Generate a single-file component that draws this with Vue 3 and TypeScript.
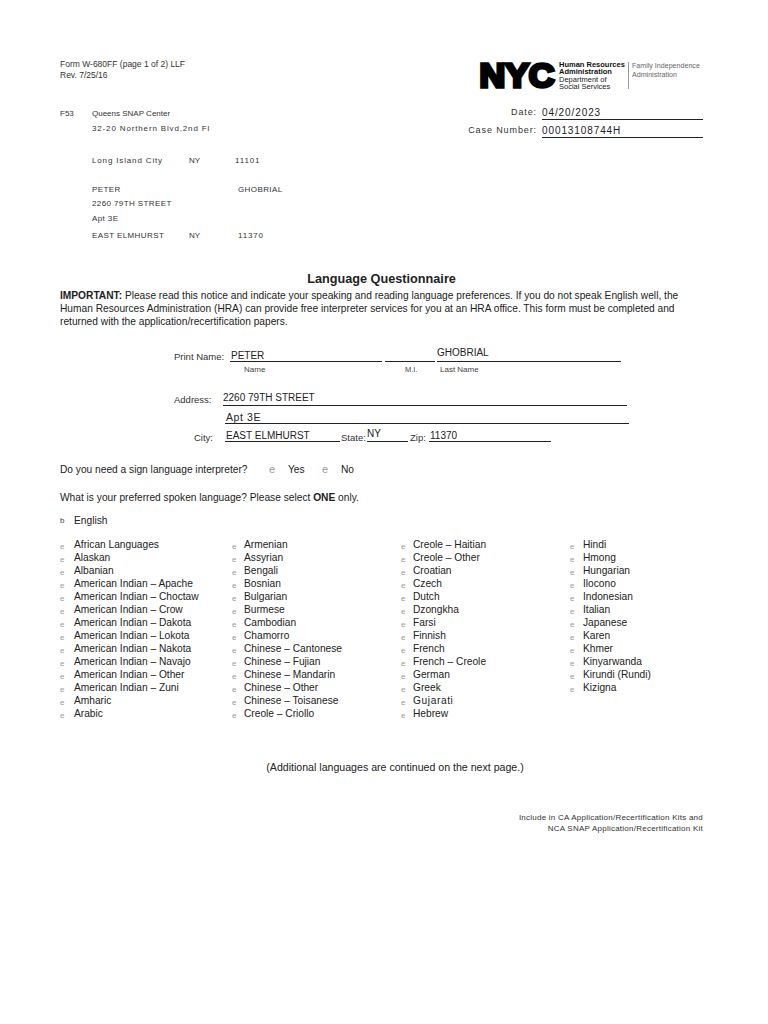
<script setup lang="ts">
const columns: string[][] = [
  ['African Languages','Alaskan','Albanian','American Indian – Apache','American Indian – Choctaw','American Indian – Crow','American Indian – Dakota','American Indian – Lokota','American Indian – Nakota','American Indian – Navajo','American Indian – Other','American Indian – Zuni','Amharic','Arabic'],
  ['Armenian','Assyrian','Bengali','Bosnian','Bulgarian','Burmese','Cambodian','Chamorro','Chinese – Cantonese','Chinese – Fujian','Chinese – Mandarin','Chinese – Other','Chinese – Toisanese','Creole – Criollo'],
  ['Creole – Haitian','Creole – Other','Croatian','Czech','Dutch','Dzongkha','Farsi','Finnish','French','French – Creole','German','Greek','Gujarati','Hebrew'],
  ['Hindi','Hmong','Hungarian','Ilocono','Indonesian','Italian','Japanese','Karen','Khmer','Kinyarwanda','Kirundi (Rundi)','Kizigna'],
]
</script>

<template>
  <main class="page">
    <header class="top">
      <div class="formid">
        <div>Form W-680FF (page 1 of 2) LLF</div>
        <div>Rev. 7/25/16</div>
      </div>
      <div class="logo">
        <svg class="nyc" width="78" height="40" viewBox="0 0 78 40" role="img" aria-label="NYC">
          <text x="1.5" y="31" textLength="75" lengthAdjust="spacingAndGlyphs" font-family="Liberation Sans" font-weight="700" font-size="34" stroke="#000" stroke-width="3.4" fill="#000">NYC</text>
        </svg>
        <div class="hra">
          <b>Human Resources</b>
          <b>Administration</b>
          <span>Department of</span>
          <span>Social Services</span>
        </div>
        <div class="fia">
          <span>Family Independence</span>
          <span>Administration</span>
        </div>
      </div>
    </header>

    <section class="address-block">
      <div class="addr-left">
        <div class="a-row first"><span class="code">F53</span><span>Queens SNAP Center</span></div>
        <div class="a-row second"><span class="code"></span><span class="sp">32-20 Northern Blvd,2nd Fl</span></div>
        <div class="a-row third sp"><span class="code"></span><span class="city">Long Island City</span><span class="st">NY</span><span class="zip1">11101</span></div>
        <div class="a-row fourth sn"><span class="code"></span><span class="wide">PETER</span><span>GHOBRIAL</span></div>
        <div class="a-row t1 sn"><span class="code"></span><span>2260 79TH STREET</span></div>
        <div class="a-row t2 sn"><span class="code"></span><span>Apt 3E</span></div>
        <div class="a-row t3 sn"><span class="code"></span><span class="city">EAST ELMHURST</span><span class="st">NY</span><span class="zip2">11370</span></div>
      </div>
      <div class="case">
        <div class="case-row"><span class="case-label">Date:</span><span class="case-val">04/20/2023</span></div>
        <div class="case-row"><span class="case-label">Case Number:</span><span class="case-val">00013108744H</span></div>
      </div>
    </section>

    <h1>Language Questionnaire</h1>
    <p class="notice"><b>IMPORTANT:</b> Please read this notice and indicate your speaking and reading language preferences. If you do not speak English well, the Human Resources Administration (HRA) can provide free interpreter services for you at an HRA office. This form must be completed and returned with the application/recertification papers.</p>

    <section class="fields">
      <div class="f-row name-row">
        <span class="f-label l1">Print Name:</span>
        <span class="line first-name">PETER</span>
        <span class="line mi"></span>
        <span class="line last-name">GHOBRIAL</span>
      </div>
      <div class="captions"><span class="c1">Name</span><span class="c2">M.I.</span><span>Last Name</span></div>
      <div class="f-row addr1">
        <span class="f-label l2">Address:</span>
        <span class="line street">2260 79TH STREET</span>
      </div>
      <div class="f-row addr2"><span class="line apt">Apt 3E</span></div>
      <div class="f-row addr3">
        <span class="f-label l3">City:</span>
        <span class="line city-val">EAST ELMHURST</span>
        <span class="f-label state-label">State:</span>
        <span class="line state-val">NY</span>
        <span class="f-label zip-label">Zip:</span>
        <span class="line zip-val">11370</span>
      </div>
    </section>

    <div class="sign">
      <span class="q">Do you need a sign language interpreter?</span>
      <span class="mark big">e</span><span class="yes">Yes</span>
      <span class="mark big">e</span><span>No</span>
    </div>
    <p class="pref">What is your preferred spoken language? Please select <b>ONE</b> only.</p>
    <div class="english"><span class="mark">b</span><span>English</span></div>

    <section class="langs">
      <ul v-for="(col, i) in columns" :key="i">
        <li v-for="lang in col" :key="lang"><span class="mark">e</span><span :class="{ spaced: lang === 'Gujarati' }">{{ lang }}</span></li>
      </ul>
    </section>

    <p class="more">(Additional languages are continued on the next page.)</p>
    <footer class="foot">
      <div>Include in CA Application/Recertification Kits and</div>
      <div>NCA SNAP Application/Recertification Kit</div>
    </footer>
  </main>
</template>

<style>
html, body { background: #fff; }
</style>

<style scoped>
.page {
  box-sizing: border-box; width: 768px; height: 1024px; padding: 60px 65px 0 60px;
  background: #fff; color: #222; font-family: "Liberation Sans", Arial, sans-serif; overflow: hidden;
}
.top { display: flex; justify-content: space-between; height: 38px; }
.formid { font-size: 8.5px; line-height: 11px; color: #333; margin-top: -1px; }
.logo { display: flex; align-items: flex-start; margin-right: 3px; }
.nyc { margin-top: -4px; }
.hra { display: flex; flex-direction: column; font-size: 7.5px; line-height: 7.4px; margin: 1px 3px 0 3px; color: #222; width: 66px; white-space: nowrap; }
.hra b { font-weight: 700; color: #111; }
.fia { display: flex; flex-direction: column; box-sizing: border-box; width: 72px; margin-top: 2px; border-left: 1px solid #999; padding-left: 3px; height: 27px; font-size: 7.1px; line-height: 8.5px; color: #666; white-space: nowrap; }

.address-block { display: flex; justify-content: space-between; height: 173px; }
.addr-left { font-size: 8px; color: #333; }
.a-row { display: flex; height: 12px; line-height: 12px; white-space: nowrap; }
.first { margin-top: 10px; }
.second { margin-top: 3px; }
.third { margin-top: 20px; }
.fourth { margin-top: 17px; }
.t1 { margin-top: 2px; }
.t2 { margin-top: 3px; }
.t3 { margin-top: 5px; }
.code { width: 32px; }
.sp { letter-spacing: 0.85px; }
.sn { letter-spacing: 0.4px; }
.city { width: 97px; }
.st { width: 49px; letter-spacing: 0; }
.zip1 { margin-left: -3px; }
.wide { width: 146px; }
.zip2 { padding-left: 0; letter-spacing: 0.85px; }
.case { width: 235px; margin-top: 8px; font-size: 9px; letter-spacing: 0.9px; }
.case-row { display: flex; justify-content: flex-end; align-items: flex-end; gap: 5px; margin-bottom: 4px; }
.case-label { color: #333; margin-bottom: 3px; }
.case-val { width: 161px; border-bottom: 1px solid #222; height: 13px; line-height: 13px; font-size: 10px; }

h1 { margin: 0; text-align: center; font-size: 12.7px; line-height: 16px; font-weight: 700; color: #222; }
.notice { margin: 2px 0 0; font-size: 10.2px; line-height: 13px; color: #222; }

.fields { margin-top: 20px; font-size: 10px; height: 104px; }
.f-row { display: flex; align-items: flex-end; white-space: nowrap; }
.f-label { color: #333; font-size: 9.5px; }
.line { border-bottom: 1px solid #222; display: block; box-sizing: border-box; }
.name-row { height: 14px; }
.l1 { margin-left: 114px; width: 56px; }
.first-name { width: 152px; padding-left: 1px; }
.mi { width: 50px; margin-left: 3px; height: 12px; }
.last-name { width: 184px; margin-left: 2px; padding-bottom: 3px; }
.captions { display: flex; font-size: 8px; color: #444; margin-top: 3px; height: 10px; line-height: 10px; padding-left: 184px; }
.c1 { width: 161px; }
.c2 { width: 35px; font-size: 7.5px; }
.addr1 { margin-top: 18px; height: 13px; }
.l2 { margin-left: 114px; width: 49px; margin-bottom: 1px; }
.street { width: 404px; padding-bottom: 2px; }
.addr2 { height: 18px; padding-left: 165px; }
.apt { width: 404px; padding-left: 1px; font-size: 10.5px; letter-spacing: 0.6px; }
.addr3 { height: 18px; }
.l3 { margin-left: 134px; width: 31px; margin-bottom: -1px; }
.city-val { width: 115px; padding-left: 1px; }
.state-label { margin-left: 1px; width: 26px; margin-bottom: -1px; }
.state-val { width: 41px; padding-bottom: 2px; }
.zip-label { margin-left: 2px; width: 19px; margin-bottom: -1px; }
.zip-val { width: 122px; padding-left: 1px; }

.sign { display: flex; align-items: center; margin-top: 10px; height: 14px; font-size: 10.2px; }
.q { width: 209px; }
.mark { color: #999; font-size: 8px; width: 14px; flex: none; }
.big { font-size: 11px; width: 19px; }
.yes { width: 34px; }
.pref { margin: 15px 0 0; font-size: 10.2px; line-height: 14px; }
.english { display: flex; align-items: center; margin-top: 8px; font-size: 10.2px; height: 14px; }
.english .mark { color: #444; }

.langs { display: grid; grid-template-columns: 172px 169px 169px 1fr; margin-top: 11px; font-size: 10.2px; }
ul { list-style: none; margin: 0; padding: 0; }
li { display: flex; align-items: center; height: 13px; white-space: nowrap; }
li .mark { width: 12px; margin-top: 3px; }
ul:first-child li .mark { width: 14px; }
ul:last-child li .mark { width: 13px; }
.spaced { letter-spacing: 0.6px; }
.more { margin: 40px 0 0; text-align: center; font-size: 10.6px; line-height: 14px; padding-left: 27px; }
.foot { margin-top: 38px; text-align: right; font-size: 8px; line-height: 11px; color: #333; letter-spacing: 0.24px; }
</style>
